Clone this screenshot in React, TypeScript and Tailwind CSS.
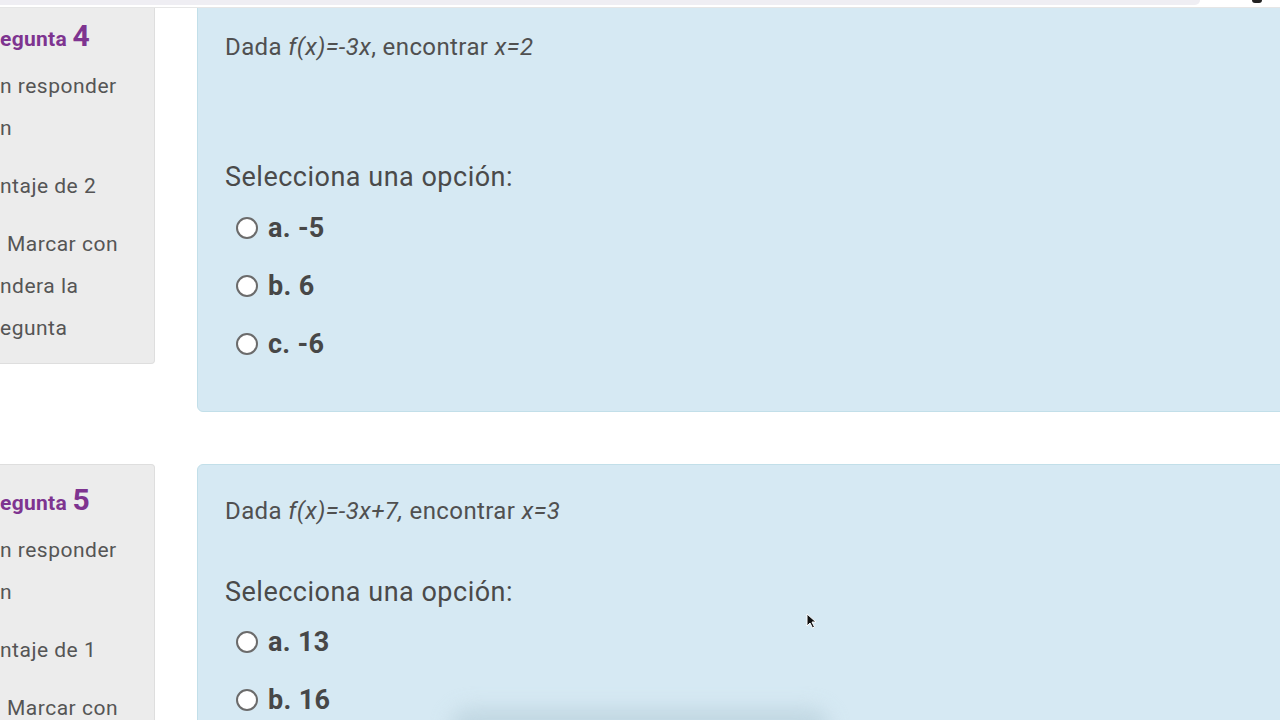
import React from "react";

const font = { fontFamily: "Roboto, 'Noto Sans', Arial, sans-serif" };

function Radio() {
  return (
    <span className="inline-block w-[22px] h-[22px] rounded-full border-[2px] border-[#6b6b6b] bg-white shrink-0" />
  );
}

function Option({ label }: { label: string }) {
  return (
    <div className="flex items-center h-[40px] pl-[11px]">
      <Radio />
      <span className="ml-[10px] text-[27px] font-bold tracking-[0.3px] text-[#474747] leading-[40px]">{label}</span>
    </div>
  );
}

function InfoPanel({ n, pts, tall, full }: { n: string; pts: string; tall: boolean; full: boolean }) {
  return (
    <div
      className={`w-[155px] shrink-0 bg-[#ececec] border border-l-0 border-[#dedede] rounded-r-[4px] overflow-hidden pt-[17px] ${tall ? "h-[364px]" : "h-[300px]"}`}
    >
      <div className="h-[36px] leading-[36px] whitespace-nowrap text-[#7e3490] font-bold tracking-[0.3px]">
        <span className="text-[21px]">egunta </span>
        <span className="text-[30px]">{n}</span>
      </div>
      <div className="mt-[11px] text-[21px] tracking-[0.5px] text-[#555555] whitespace-nowrap">
        <div className="leading-[42px]">n responder</div>
        <div className="leading-[42px]">n</div>
        <div className="leading-[42px] mt-[16px]">ntaje de {pts}</div>
        <div className="leading-[42px] mt-[16px] pl-[7px]">Marcar con</div>
        {full && (
          <>
            <div className="leading-[42px]">ndera la</div>
            <div className="leading-[42px]">egunta</div>
          </>
        )}
      </div>
    </div>
  );
}

export default function App() {
  return (
    <div className="relative w-[1280px] h-[720px] overflow-hidden bg-white" style={font}>
      {/* Question 4 */}
      <div className="flex items-start gap-[42px]">
        <InfoPanel n="4" pts="2" tall full />
        <div className="flex-1 mr-[-20px] h-[412px] bg-[#d6e9f3] border border-[#c2dfe9] rounded-[6px] pl-[27px] pt-[30px] pb-[48px]">
          <div className="text-[24px] tracking-[0.4px] leading-[32px] text-[#505050] whitespace-nowrap">
            Dada <i>f(x)=-3x</i>, encontrar <i>x=2</i>
          </div>
          <div className="mt-[96px] text-[27px] tracking-[0.5px] leading-[36px] text-[#4a4a4a]">Selecciona una opción:</div>
          <div className="mt-[13px] flex flex-col gap-[18px]">
            <Option label="a. -5" />
            <Option label="b. 6" />
            <Option label="c. -6" />
          </div>
        </div>
      </div>

      {/* Question 5 */}
      <div className="flex items-start gap-[42px] mt-[52px]">
        <InfoPanel n="5" pts="1" tall={false} full={false} />
        <div className="flex-1 mr-[-20px] h-[300px] bg-[#d6e9f3] border border-[#c2dfe9] rounded-[6px] pl-[27px] pt-[30px]">
          <div className="text-[24px] tracking-[0.4px] leading-[32px] text-[#505050] whitespace-nowrap">
            Dada <i>f(x)=-3x+7,</i> encontrar <i>x=3</i>
          </div>
          <div className="mt-[47px] text-[27px] tracking-[0.5px] leading-[36px] text-[#4a4a4a]">Selecciona una opción:</div>
          <div className="mt-[12px] flex flex-col gap-[18px]">
            <Option label="a. 13" />
            <Option label="b. 16" />
          </div>
        </div>
      </div>

      {/* top fixed bar overlay */}
      <div className="absolute top-0 left-0 w-full h-[8px] bg-white border-b border-[#e6e6e6]">
        <div className="w-[1200px] h-[5px] bg-[#efeef3] rounded-br-[8px]" />
        <div className="absolute right-[18px] top-0 w-[10px] h-[3px] bg-[#222] rounded-b-full" />
      </div>

      {/* bottom blurred shadow */}
      <div className="absolute left-[450px] top-[708px] w-[380px] h-[40px] bg-[#bcd3de] rounded-[20px] blur-[10px] opacity-80" />

      {/* mouse cursor */}
      <svg className="absolute left-[806px] top-[613px]" width="12" height="17" viewBox="0 0 12 17">
        <path d="M1 1 L1 13 L4 10 L6.5 15 L8.5 14 L6 9 L10 9 Z" fill="#111" stroke="#fff" strokeWidth="1" />
      </svg>
    </div>
  );
}
